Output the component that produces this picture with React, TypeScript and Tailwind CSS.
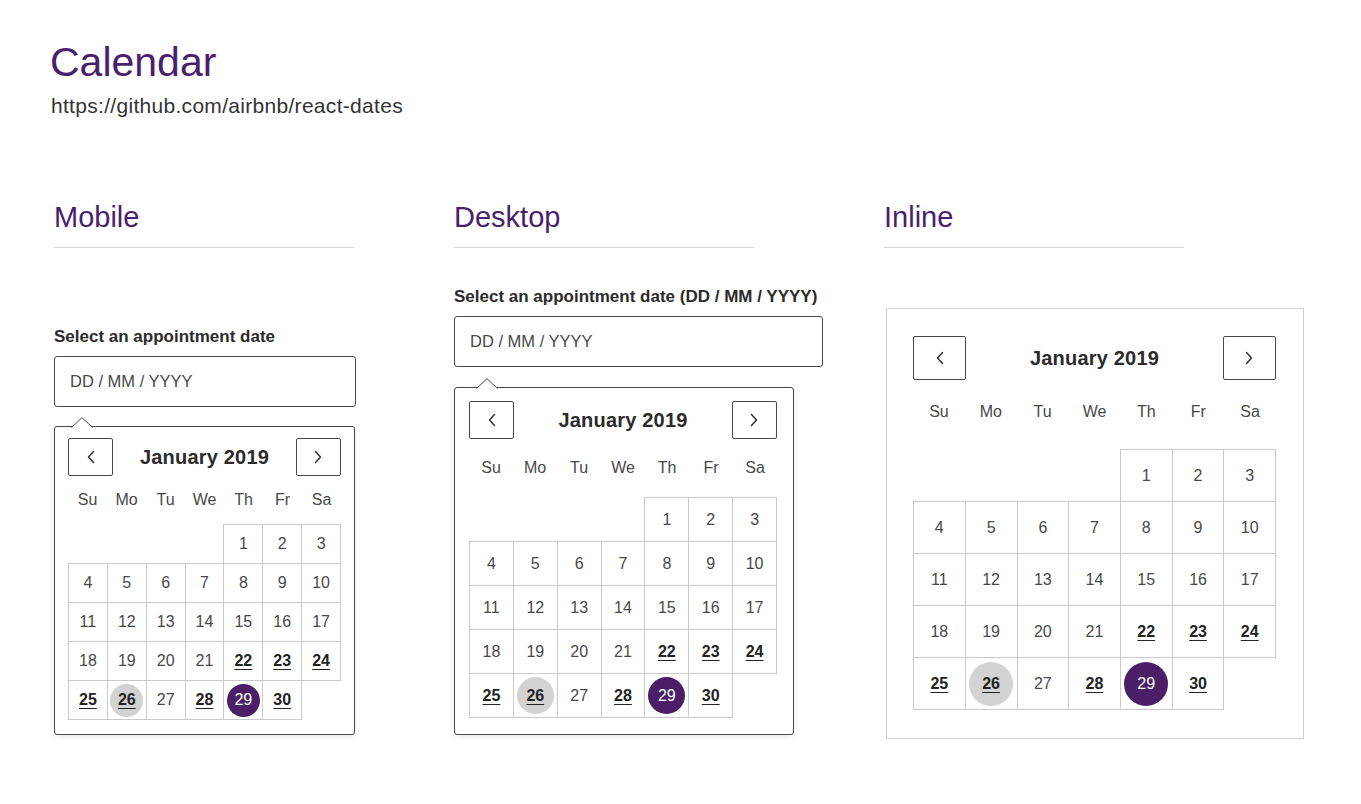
import React from "react";

type Variant = {
  cell: string;
  circle: string;
  nav: string;
  header: string;
  weekRow: string;
  weekCell: string;
};

const mobile: Variant = {
  cell: "w-[39px] h-[39px]",
  circle: "w-[33px] h-[33px]",
  nav: "w-[45px] h-[38px]",
  header: "h-[38px]",
  weekRow: "h-[48px]",
  weekCell: "w-[39px]",
};

const desktop: Variant = {
  cell: "w-[44px] h-[44px]",
  circle: "w-[37px] h-[37px]",
  nav: "w-[45px] h-[38px]",
  header: "h-[38px]",
  weekRow: "h-[58px]",
  weekCell: "w-[44px]",
};

const inline: Variant = {
  cell: "w-[52px] h-[52px]",
  circle: "w-[44px] h-[44px]",
  nav: "w-[53px] h-[44px]",
  header: "h-[44px]",
  weekRow: "h-[64px] mb-[5px]",
  weekCell: "w-[52px]",
};

const weekdays = ["Su", "Mo", "Tu", "We", "Th", "Fr", "Sa"];

// calendar rows as shown (month starts on Thursday)
const weeks: (number | null)[][] = [
  [null, null, null, null, 1, 2, 3],
  [4, 5, 6, 7, 8, 9, 10],
  [11, 12, 13, 14, 15, 16, 17],
  [18, 19, 20, 21, 22, 23, 24],
  [25, 26, 27, 28, 29, 30, null],
];

const available = [22, 23, 24, 25, 26, 28, 30];

const Chevron = ({ dir }: { dir: "left" | "right" }) => (
  <svg width="8" height="14" viewBox="0 0 8 14" fill="none">
    <polyline
      points={dir === "left" ? "6.5,1.5 1.5,7 6.5,12.5" : "1.5,1.5 6.5,7 1.5,12.5"}
      stroke="#2b2b2b"
      strokeWidth="1.4"
      strokeLinecap="round"
      strokeLinejoin="round"
    />
  </svg>
);

const DayCell = ({ day, v }: { day: number | null; v: Variant }) => {
  if (day === null) return <td className={`${v.cell} p-0`} />;
  const isAvail = available.includes(day);
  let inner: React.ReactNode = <span className="text-[#484848]">{day}</span>;
  if (day === 29) {
    inner = (
      <span className={`${v.circle} rounded-full bg-[#4a1f68] text-white flex items-center justify-center`}>
        {day}
      </span>
    );
  } else if (day === 26) {
    inner = (
      <span
        className={`${v.circle} rounded-full bg-[#d2d2d2] text-[#222] font-semibold underline underline-offset-[3px] flex items-center justify-center`}
      >
        {day}
      </span>
    );
  } else if (isAvail) {
    inner = <span className="text-[#222] font-semibold underline underline-offset-[3px]">{day}</span>;
  }
  return (
    <td className={`${v.cell} p-0 border border-[#cacaca] text-center align-middle`}>
      <div className="flex items-center justify-center w-full h-full">{inner}</div>
    </td>
  );
};

const Month = ({ v }: { v: Variant }) => (
  <div>
    <div className={`flex items-center justify-between ${v.header}`}>
      <button className={`${v.nav} border border-[#484848] rounded-[2px] bg-white flex items-center justify-center`}>
        <Chevron dir="left" />
      </button>
      <div className="text-[20px] font-bold text-[#2b2b2b] tracking-[0.2px]">January 2019</div>
      <button className={`${v.nav} border border-[#484848] rounded-[2px] bg-white flex items-center justify-center`}>
        <Chevron dir="right" />
      </button>
    </div>
    <div className={`flex items-center ${v.weekRow}`}>
      {weekdays.map((d) => (
        <div key={d} className={`${v.weekCell} text-center text-[16px] text-[#484848]`}>
          {d}
        </div>
      ))}
    </div>
    <table className="border-collapse text-[16px]">
      <tbody>
        {weeks.map((w, i) => (
          <tr key={i}>
            {w.map((d, j) => (
              <DayCell key={j} day={d} v={v} />
            ))}
          </tr>
        ))}
      </tbody>
    </table>
  </div>
);

const Heading = ({ children }: { children: React.ReactNode }) => (
  <div className="w-[300px] border-b border-[#d4d4d4] h-[49px]">
    <h2 className="text-[29px] font-light text-[#4a1f6e] leading-[32px] pt-[2px]">{children}</h2>
  </div>
);

const Arrow = ({ left }: { left: string }) => (
  <div className={`absolute -top-[10px] ${left} w-0 h-0`}>
    <svg width="22" height="11" viewBox="0 0 22 11" className="block">
      <polygon points="0,11 11,0 22,11" fill="white" />
      <polyline points="0.5,10.5 11,0.7 21.5,10.5" fill="none" stroke="#484848" strokeWidth="1" />
    </svg>
  </div>
);

export default function App() {
  return (
    <div className="min-h-screen bg-white font-['Liberation_Sans',Arial,sans-serif] text-[#2b2b2b]">
      <div className="pl-[50px] pt-[37px]">
        <h1 className="text-[41px] font-light text-[#4a1f6e] leading-[50px]">Calendar</h1>
        <p className="text-[21px] tracking-[0.3px] text-[#333] leading-[24px] mt-[7px] pl-[1px]">
          https://github.com/airbnb/react-dates
        </p>
      </div>

      <div className="flex pl-[54px] mt-[81px]">
        {/* Mobile */}
        <div className="w-[400px] shrink-0">
          <Heading>Mobile</Heading>
          <div className="mt-[79px]">
            <label className="block text-[17px] font-bold text-[#2b2b2b] leading-[20px]">Select an appointment date</label>
            <div className="mt-[9px] w-[302px] h-[51px] border border-[#484848] rounded-[3px] flex items-center pl-[15px] text-[16.5px] text-[#484848]">
              DD / MM / YYYY
            </div>
            <div className="relative mt-[19px] w-[301px] border border-[#484848] rounded-[3px] bg-white shadow-[0_2px_6px_rgba(0,0,0,0.08)] pt-[11px] pb-[14px] px-[13px]">
              <Arrow left="left-[16px]" />
              <Month v={mobile} />
            </div>
          </div>
        </div>

        {/* Desktop */}
        <div className="w-[430px] shrink-0">
          <Heading>Desktop</Heading>
          <div className="mt-[39px]">
            <label className="block text-[17px] font-bold text-[#2b2b2b] leading-[20px]">
              Select an appointment date (DD / MM / YYYY)
            </label>
            <div className="mt-[9px] w-[369px] h-[51px] border border-[#484848] rounded-[3px] flex items-center pl-[15px] text-[16.5px] text-[#484848]">
              DD / MM / YYYY
            </div>
            <div className="relative mt-[20px] w-[340px] border border-[#484848] rounded-[3px] bg-white shadow-[0_2px_6px_rgba(0,0,0,0.08)] pt-[13px] pb-[16px] pl-[14px] pr-[16px]">
              <Arrow left="left-[21px]" />
              <Month v={desktop} />
            </div>
          </div>
        </div>

        {/* Inline */}
        <div className="shrink-0">
          <Heading>Inline</Heading>
          <div className="mt-[60px] ml-[2px] w-[418px] border border-[#d0d0d0] pt-[27px] pb-[28px] pl-[26px] pr-[27px]">
            <Month v={inline} />
          </div>
        </div>
      </div>
    </div>
  );
}
